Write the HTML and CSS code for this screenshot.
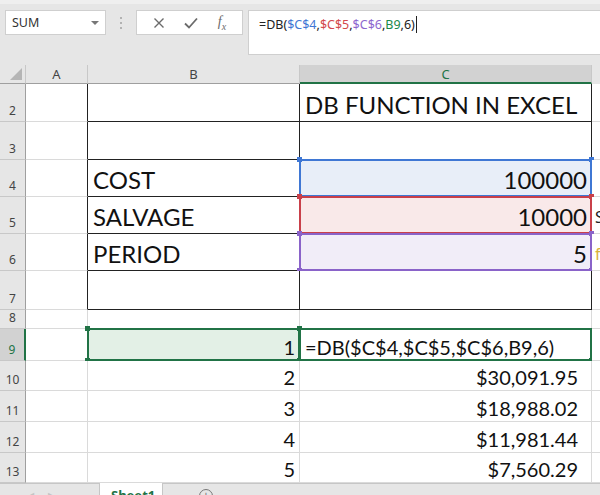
FILE: index.html
```html
<!DOCTYPE html>
<html lang="en">
<head>
    <meta charset="UTF-8">
    <title>DB function in Excel</title>
    <link rel="stylesheet" href="styles.css">
</head>
<body>
    <div class="toolbar">
        <div class="namebox">
            <span>SUM</span>
            <span class="caret"></span>
        </div>
        <div class="grip">
            <svg width="4" height="14" viewBox="0 0 4 14"><circle cx="2" cy="2" r="1" fill="#a0a0a0"/><circle cx="2" cy="7" r="1" fill="#a0a0a0"/><circle cx="2" cy="12" r="1" fill="#a0a0a0"/></svg>
        </div>
        <div class="fbuttons">
            <svg width="12" height="12" viewBox="0 0 12 12"><path d="M1.5 1.5 L10.5 10.5 M10.5 1.5 L1.5 10.5" stroke="#6b6b6b" stroke-width="1.4" fill="none"/></svg>
            <svg width="14" height="12" viewBox="0 0 14 12"><path d="M1 6.5 L5 10.5 L13 1.5" stroke="#6b6b6b" stroke-width="1.8" fill="none"/></svg>
            <span class="fx">f<sub>x</sub></span>
        </div>
        <div class="formula">=DB(<span class="r-blue">$C$4</span>,<span class="r-red">$C$5</span>,<span class="r-purple">$C$6</span>,<span class="r-green">B9</span>,6)<span class="cursor"></span></div>
    </div>

    <div class="sheet">
        <!-- header row -->
        <div class="corner"><svg width="12" height="12" viewBox="0 0 12 12"><path d="M12 0 L12 12 L0 12 Z" fill="#b5b5b5"/></svg></div>
        <div class="h">A</div>
        <div class="h">B</div>
        <div class="h sel">C</div>
        <div class="h end"></div>

        <!-- row 2 -->
        <div class="rh">2</div>
        <div class="c edge"></div>
        <div class="c tb"></div>
        <div class="c tb last">DB FUNCTION IN EXCEL</div>
        <div class="c d"></div>

        <!-- row 3 -->
        <div class="rh">3</div>
        <div class="c edge"></div>
        <div class="c tb"></div>
        <div class="c tb last"></div>
        <div class="c d"></div>

        <!-- row 4 -->
        <div class="rh">4</div>
        <div class="c edge"></div>
        <div class="c tb">COST</div>
        <div class="c tb last num ref blue">100000
            <span class="box"></span>
            <span class="hd tl"></span><span class="hd tr"></span>
        </div>
        <div class="c d"></div>

        <!-- row 5 -->
        <div class="rh">5</div>
        <div class="c edge"></div>
        <div class="c tb">SALVAGE</div>
        <div class="c tb last num ref red">10000
            <span class="box"></span>
            <span class="hd tl"></span><span class="hd tr"></span>
        </div>
        <div class="c d"><span class="tip">S</span></div>

        <!-- row 6 -->
        <div class="rh">6</div>
        <div class="c edge"></div>
        <div class="c tb">PERIOD</div>
        <div class="c tb last num ref purple">5
            <span class="box"></span>
            <span class="hd tl"></span><span class="hd tr"></span>
            <span class="hd bl"></span><span class="hd br"></span>
        </div>
        <div class="c d"><span class="tip yel">f</span></div>

        <!-- row 7 -->
        <div class="rh">7</div>
        <div class="c edge"></div>
        <div class="c tb"></div>
        <div class="c tb last"></div>
        <div class="c d"></div>

        <!-- row 8 -->
        <div class="rh">8</div>
        <div class="c"></div>
        <div class="c"></div>
        <div class="c"></div>
        <div class="c d"></div>

        <!-- row 9 -->
        <div class="rh sel">9</div>
        <div class="c"></div>
        <div class="c sm num ref green">1
            <span class="box"></span>
            <span class="hd tl"></span><span class="hd tr"></span>
            <span class="hd bl"></span><span class="hd br"></span>
        </div>
        <div class="c sm active">=DB($C$4,$C$5,$C$6,B9,6)
            <span class="box"></span>
            <span class="hd br"></span>
        </div>
        <div class="c d"></div>

        <!-- row 10 -->
        <div class="rh">10</div>
        <div class="c"></div>
        <div class="c sm num">2</div>
        <div class="c sm num money">$30,091.95</div>
        <div class="c d"></div>

        <!-- row 11 -->
        <div class="rh">11</div>
        <div class="c"></div>
        <div class="c sm num">3</div>
        <div class="c sm num money">$18,988.02</div>
        <div class="c d"></div>

        <!-- row 12 -->
        <div class="rh">12</div>
        <div class="c"></div>
        <div class="c sm num">4</div>
        <div class="c sm num money">$11,981.44</div>
        <div class="c d"></div>

        <!-- row 13 -->
        <div class="rh">13</div>
        <div class="c"></div>
        <div class="c sm num">5</div>
        <div class="c sm num money">$7,560.29</div>
        <div class="c d"></div>
    </div>

    <div class="tabs">
        <div class="nav"><span>&#9664;</span><span>&#9654;</span></div>
        <div class="tab">Sheet1</div>
        <div class="add"><span class="plus">+</span></div>
    </div>
</body>
</html>
```

FILE: styles.css
```css
/* page */
body {
    margin: 0;
    width: 600px;
    height: 495px;
    overflow: hidden;
    background: #fff;
    font-family: "Noto Sans", "Open Sans", sans-serif;
}

/* formula bar area */
.toolbar {
    height: 62px;
    box-sizing: border-box;
    border-top: 4px solid #efefef;
    background: #e6e6e6;
    padding: 6px 0 0 5px;
    display: flex;
    align-items: flex-start;
}

.namebox {
    width: 101px;
    height: 25px;
    box-sizing: border-box;
    background: #fff;
    border: 1px solid #cfcfcf;
    display: flex;
    align-items: center;
    justify-content: space-between;
    padding: 0 6px 0 6px;
    font-size: 12.5px;
    color: #333;
}

.caret {
    width: 0;
    height: 0;
    border-left: 4px solid transparent;
    border-right: 4px solid transparent;
    border-top: 4px solid #777;
}

.grip {
    width: 30px;
    height: 25px;
    display: flex;
    align-items: center;
    justify-content: center;
}

.fbuttons {
    width: 107px;
    height: 25px;
    box-sizing: border-box;
    background: #fff;
    border: 1px solid #cfcfcf;
    display: flex;
    align-items: center;
    justify-content: space-around;
    padding: 0 6px;
}

.fx {
    font-family: "Liberation Serif", serif;
    font-style: italic;
    font-size: 14px;
    color: #6b6b6b;
}

.fx sub {
    font-size: 10px;
}

.formula {
    flex: 1;
    height: 45px;
    margin-left: 5px;
    box-sizing: border-box;
    background: #fff;
    border: 1px solid #cfcfcf;
    border-right: none;
    padding: 5px 0 0 10px;
    font-size: 12.5px;
    color: #222;
    display: flex;
    align-items: flex-start;
    white-space: pre;
}

.r-blue { color: #3f77d4; }
.r-red { color: #d2484c; }
.r-purple { color: #8d66cf; }
.r-green { color: #1a8a4a; }

.cursor {
    display: inline-block;
    width: 1px;
    height: 17px;
    margin-left: 1px;
    background: #222;
}

/* grid */
.sheet {
    display: grid;
    grid-template-columns: 26px 62px 212px 292px 8px;
    grid-template-rows: 22px 38px 38px 37px 37px 37px 39px 19px 32px 30px 31px 31px 30px;
    background: #e6e6e6;
}

.sheet > div {
    box-sizing: border-box;
}

.corner {
    border-right: 1px solid #c8c8c8;
    border-bottom: 1px solid #9f9f9f;
    display: flex;
    align-items: flex-end;
    justify-content: flex-end;
    padding: 0 3px 3px 0;
    margin-top: 3px;
}

.h {
    margin-top: 3px;
    border-right: 1px solid #c8c8c8;
    border-bottom: 1px solid #9f9f9f;
    display: flex;
    align-items: center;
    justify-content: center;
    font-size: 13px;
    color: #444;
}

.h.sel {
    background: #d2d2d2;
    color: #217346;
    border-bottom: 2px solid #217346;
}

.h.end {
    border-right: none;
    border-bottom: none;
}

.rh {
    background: #e6e6e6;
    border-right: 1px solid #9f9f9f;
    border-bottom: 1px solid #c8c8c8;
    display: flex;
    align-items: flex-end;
    justify-content: center;
    padding-bottom: 2px;
    font-size: 12px;
    color: #444;
}

.rh.sel {
    background: #d2d2d2;
    color: #217346;
    border-right: 2px solid #217346;
}

.c {
    position: relative;
    background: #fff;
    border-right: 1px solid #dadada;
    border-bottom: 1px solid #dadada;
    display: flex;
    align-items: flex-end;
    padding: 0 4px 2px 5px;
    font-family: Lato, "Open Sans", sans-serif;
    font-size: 24px;
    color: #111;
    white-space: nowrap;
}

.c.sm {
    font-size: 20px;
    padding-bottom: 1px;
}

.c.d {
    border-right: none;
    overflow: hidden;
    padding: 0;
}

/* bordered table B2:C7 */
.c.edge {
    border-right-color: #222;
}

.c.tb {
    border-right-color: #222;
    border-bottom-color: #222;
}

.num {
    justify-content: flex-end;
}

.money {
    padding-right: 13px;
}

/* reference highlights */
.ref.blue { background: #e8eef8; --ref: #3f77d4; }
.ref.red { background: #f9e9e9; --ref: #c9404a; }
.ref.purple { background: #f1edf8; --ref: #8a63c9; }
.ref.green { background: #e3f0e6; --ref: #217346; }
.active { --ref: #217346; }

.box {
    position: absolute;
    top: -1px;
    left: -1px;
    right: -1px;
    bottom: -1px;
    border: 2px solid var(--ref);
}

.hd {
    position: absolute;
    width: 5px;
    height: 5px;
    background: var(--ref);
}

.hd.tl { top: -3px; left: -3px; }
.hd.tr { top: -3px; right: -3px; }
.hd.bl { bottom: -3px; left: -3px; }
.hd.br { bottom: -3px; right: -3px; }

.tip {
    font-family: "Noto Sans", sans-serif;
    font-size: 16px;
    color: #222;
    padding: 0 0 5px 3px;
}

.tip.yel {
    color: #d8b23a;
}

/* sheet tabs */
.tabs {
    height: 12px;
    display: flex;
    background: #e6e6e6;
    overflow: hidden;
}

.nav {
    width: 100px;
    box-sizing: border-box;
    border-top: 1px solid #c6c6c6;
    border-right: 1px solid #c6c6c6;
    display: flex;
    gap: 14px;
    padding: 5px 0 0 28px;
    font-size: 8px;
    color: #c4c4c4;
}

.tab {
    width: 62px;
    background: #fff;
    padding: 4px 0 0 11px;
    box-sizing: border-box;
    font-size: 13px;
    font-weight: bold;
    color: #217346;
    line-height: 16px;
}

.add {
    flex: 1;
    border-top: 1px solid #c6c6c6;
    border-left: 1px solid #c6c6c6;
    display: flex;
    align-items: flex-start;
    padding: 5px 0 0 36px;
}

.plus {
    width: 14px;
    height: 14px;
    box-sizing: border-box;
    border: 1px solid #777;
    border-radius: 50%;
    font-size: 12px;
    line-height: 12px;
    text-align: center;
    color: #777;
}
```
